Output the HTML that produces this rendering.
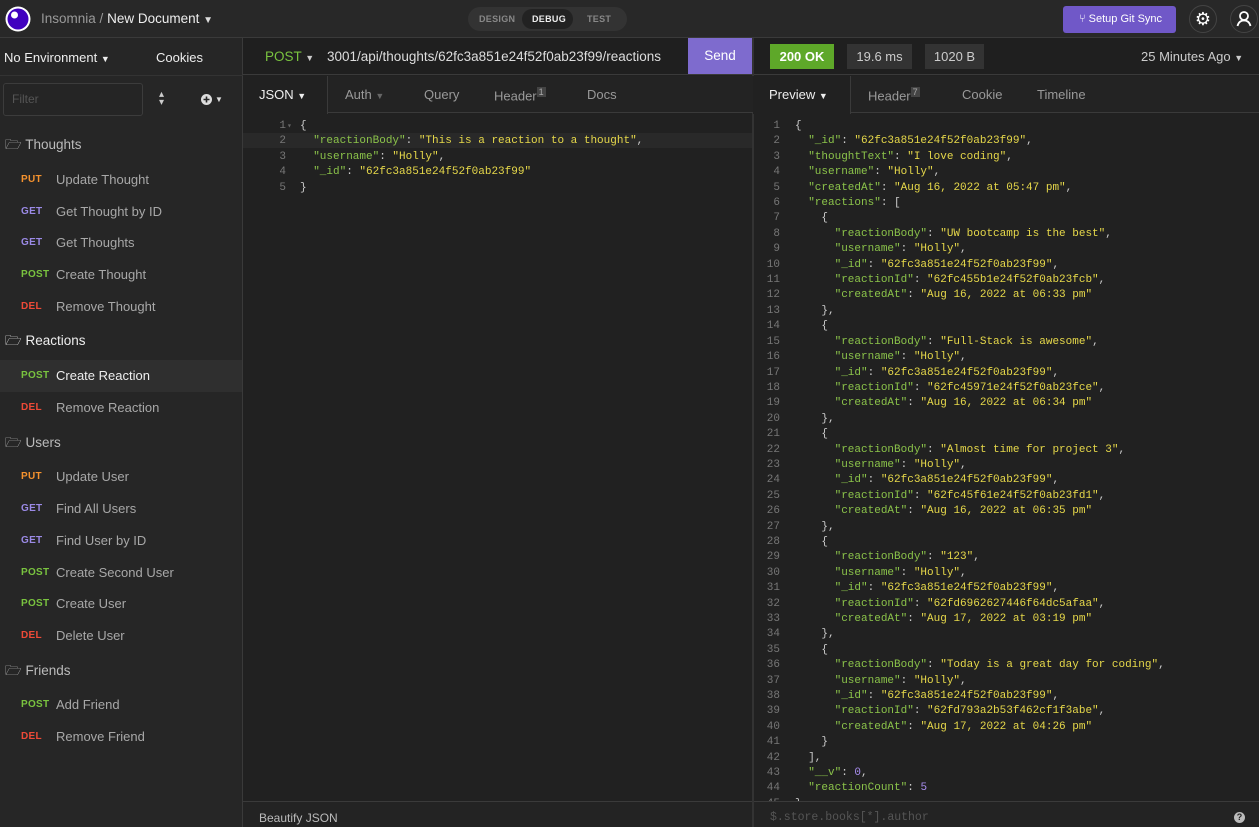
<!DOCTYPE html>
<html><head><meta charset="utf-8"><style>
*{box-sizing:border-box;margin:0;padding:0}
body{width:1259px;height:827px;overflow:hidden;background:#212121;font-family:"Liberation Sans",sans-serif;color:#ddd;position:relative;font-size:13px}
.abs{position:absolute}
.top{left:0;top:0;width:1259px;height:38px;background:#282828;border-bottom:1px solid #3a3a3a}
.side{left:0;top:38px;width:243px;height:789px;background:#262626;border-right:1px solid #3a3a3a}
.it{position:absolute;left:0;width:242px;height:32px;line-height:32px;font-size:13px;color:#a8a8a8}
.it .m{position:absolute;left:21px;font-size:10px;font-weight:bold;letter-spacing:.3px}
.it .t{position:absolute;left:56px}
.fold{position:absolute;left:5px;font-size:13.5px;color:#bbb}
.put{color:#f5922e}.get{color:#9b8ae6}.post{color:#79c33f}.del{color:#ef4a37}
.code{font-family:"Liberation Mono",monospace;font-size:11px;line-height:15.4px;white-space:pre}
.k{color:#8bc34a}.s{color:#e6d84a}.n{color:#a98ef0}.p{color:#ccc}
.ln{color:#777;text-align:right}
.tab{position:absolute;top:87px;font-size:13px;color:#999}
</style></head><body>
<div class="abs top"></div>
<svg class="abs" style="left:5px;top:6px" width="26" height="26" viewBox="0 0 26 26"><circle cx="13" cy="13" r="12.5" fill="#fff"/><circle cx="13" cy="13" r="10.5" fill="#4000bf"/><circle cx="9.5" cy="9" r="3.5" fill="#fff"/></svg>
<div class="abs" style="left:41px;top:11px;font-size:13.5px"><span style="color:#999">Insomnia</span> <span style="color:#999">/</span> <span style="color:#eee">New Document</span> <span style="font-size:10px">▼</span></div>
<div class="abs" style="left:468px;top:7px;width:159px;height:24px;border-radius:12px;background:#333"></div>
<div class="abs" style="left:522px;top:9px;width:51px;height:20px;border-radius:10px;background:#222"></div>
<div class="abs" style="left:479px;top:14px;font-size:9px;font-weight:bold;color:#888;letter-spacing:.3px">DESIGN</div>
<div class="abs" style="left:532px;top:14px;font-size:9px;font-weight:bold;color:#eee;letter-spacing:.3px">DEBUG</div>
<div class="abs" style="left:587px;top:14px;font-size:9px;font-weight:bold;color:#888;letter-spacing:.3px">TEST</div>
<div class="abs" style="left:1063px;top:6px;width:113px;height:27px;border-radius:3px;background:#7058c8;color:#fff;font-size:11px;line-height:27px;padding-left:16px">⑂ Setup Git Sync</div>
<div class="abs" style="left:1189px;top:5px;width:28px;height:28px;border-radius:50%;border:1px solid #444;color:#fff;font-size:18px;text-align:center;line-height:26px">⚙</div>
<svg class="abs" style="left:1230px;top:5px" width="28" height="28" viewBox="0 0 28 28"><circle cx="14" cy="14" r="13.5" fill="none" stroke="#444"/><circle cx="14" cy="11" r="4" fill="none" stroke="#fff" stroke-width="1.8"/><path d="M7.5 21c1-4 3.5-5.5 6.5-5.5s5.5 1.5 6.5 5.5" fill="none" stroke="#fff" stroke-width="1.8"/></svg>

<div class="abs side"></div>
<div class="abs" style="left:4px;top:50px;font-size:13px;color:#eee">No Environment <span style="font-size:9px">▼</span></div>
<div class="abs" style="left:156px;top:50px;font-size:13px;color:#eee">Cookies</div>
<div class="abs" style="left:0;top:75px;width:243px;height:1px;background:#333"></div>
<div class="abs" style="left:3px;top:83px;width:140px;height:33px;border:1px solid #3c3c3c;border-radius:3px;background:#252525;color:#555;font-size:12px;line-height:31px;padding-left:8px">Filter</div>
<div class="abs" style="left:159px;top:91px;font-size:10px;color:#ccc;line-height:8px">▴<br>▾</div>
<svg class="abs" style="left:201px;top:94px" width="11" height="11" viewBox="0 0 11 11"><circle cx="5.5" cy="5.5" r="5.5" fill="#ddd"/><path d="M5.5 2.5v6M2.5 5.5h6" stroke="#262626" stroke-width="1.6"/></svg>
<div class="abs" style="left:215px;top:95px;font-size:8px;color:#ddd">▼</div>

<div class="it" style="top:129px"><span class="fold">🗁 Thoughts</span></div>
<div class="it" style="top:164px"><span class="m put">PUT</span><span class="t">Update Thought</span></div>
<div class="it" style="top:196px"><span class="m get">GET</span><span class="t">Get Thought by ID</span></div>
<div class="it" style="top:227px"><span class="m get">GET</span><span class="t">Get Thoughts</span></div>
<div class="it" style="top:259px"><span class="m post">POST</span><span class="t">Create Thought</span></div>
<div class="it" style="top:291px"><span class="m del">DEL</span><span class="t">Remove Thought</span></div>
<div class="it" style="top:325px"><span class="fold" style="color:#eee">🗁 Reactions</span></div>
<div class="it" style="top:360px;background:#2f2f2f"><span class="m post">POST</span><span class="t" style="color:#eee">Create Reaction</span></div>
<div class="it" style="top:392px"><span class="m del">DEL</span><span class="t">Remove Reaction</span></div>
<div class="it" style="top:427px"><span class="fold">🗁 Users</span></div>
<div class="it" style="top:461px"><span class="m put">PUT</span><span class="t">Update User</span></div>
<div class="it" style="top:493px"><span class="m get">GET</span><span class="t">Find All Users</span></div>
<div class="it" style="top:525px"><span class="m get">GET</span><span class="t">Find User by ID</span></div>
<div class="it" style="top:557px"><span class="m post">POST</span><span class="t">Create Second User</span></div>
<div class="it" style="top:588px"><span class="m post">POST</span><span class="t">Create User</span></div>
<div class="it" style="top:620px"><span class="m del">DEL</span><span class="t">Delete User</span></div>
<div class="it" style="top:655px"><span class="fold">🗁 Friends</span></div>
<div class="it" style="top:689px"><span class="m post">POST</span><span class="t">Add Friend</span></div>
<div class="it" style="top:721px"><span class="m del">DEL</span><span class="t">Remove Friend</span></div>

<div class="abs" style="left:243px;top:38px;width:1016px;height:37px;background:#1f1f1f;border-bottom:1px solid #3a3a3a"></div>
<div class="abs" style="left:265px;top:49px;font-size:13.5px;color:#79c33f">POST <span style="font-size:9px;color:#ccc">▼</span></div>
<div class="abs" style="left:327px;top:49px;font-size:13.5px;color:#ddd">3001/api/thoughts/62fc3a851e24f52f0ab23f99/reactions</div>
<div class="abs" style="left:688px;top:38px;width:64px;height:36px;background:#7e6bce;color:#fff;font-size:13.5px;text-align:center;line-height:36px">Send</div>
<div class="abs" style="left:752px;top:38px;width:2px;height:789px;background:#333"></div>
<div class="abs" style="left:770px;top:44px;width:64px;height:25px;background:#5ea829;color:#fff;font-weight:bold;font-size:13px;text-align:center;line-height:25px">200 OK</div>
<div class="abs" style="left:847px;top:44px;width:65px;height:25px;background:#333;color:#ccc;font-size:13px;text-align:center;line-height:25px">19.6 ms</div>
<div class="abs" style="left:925px;top:44px;width:59px;height:25px;background:#333;color:#ccc;font-size:13px;text-align:center;line-height:25px">1020 B</div>
<div class="abs" style="left:1141px;top:49px;font-size:13px;color:#ccc">25 Minutes Ago <span style="font-size:9px">▼</span></div>

<div class="abs" style="left:243px;top:76px;width:1016px;height:37px;background:#232323;border-bottom:1px solid #3a3a3a"></div>
<div class="abs" style="left:243px;top:76px;width:85px;height:38px;background:#212121;border-right:1px solid #3a3a3a"></div>
<div class="abs" style="left:753px;top:76px;width:98px;height:38px;background:#212121;border-right:1px solid #3a3a3a"></div>
<div class="tab" style="left:259px;color:#eee">JSON <span style="font-size:9px">▼</span></div>
<div class="tab" style="left:345px">Auth <span style="font-size:9px;color:#666">▼</span></div>
<div class="tab" style="left:424px">Query</div>
<div class="tab" style="left:494px">Header<sup style="font-size:9px;background:#444;padding:0 2px;color:#aaa">1</sup></div>
<div class="tab" style="left:587px">Docs</div>
<div class="tab" style="left:769px;color:#eee">Preview <span style="font-size:9px">▼</span></div>
<div class="tab" style="left:868px">Header<sup style="font-size:9px;background:#444;padding:0 2px;color:#aaa">7</sup></div>
<div class="tab" style="left:962px">Cookie</div>
<div class="tab" style="left:1037px">Timeline</div>

<div class="abs" style="left:243px;top:133px;width:509px;height:15px;background:#292929"></div>
<div class="abs code ln" style="left:262px;top:119px;width:24px">1
2
3
4
5</div>
<div class="abs code" style="left:287px;top:119px;color:#666;font-size:8px;line-height:15.4px">▾</div>
<div class="abs code p" style="left:300px;top:119px">{
  <span class="k">"reactionBody"</span>: <span class="s">"This is a reaction to a thought"</span>,
  <span class="k">"username"</span>: <span class="s">"Holly"</span>,
  <span class="k">"_id"</span>: <span class="s">"62fc3a851e24f52f0ab23f99"</span>
}</div>

<div class="abs code ln" style="left:762px;top:119px;width:18px">1
2
3
4
5
6
7
8
9
10
11
12
13
14
15
16
17
18
19
20
21
22
23
24
25
26
27
28
29
30
31
32
33
34
35
36
37
38
39
40
41
42
43
44
45</div>
<div class="abs code p" style="left:795px;top:119px">{
  <span class="k">"_id"</span>: <span class="s">"62fc3a851e24f52f0ab23f99"</span>,
  <span class="k">"thoughtText"</span>: <span class="s">"I love coding"</span>,
  <span class="k">"username"</span>: <span class="s">"Holly"</span>,
  <span class="k">"createdAt"</span>: <span class="s">"Aug 16, 2022 at 05:47 pm"</span>,
  <span class="k">"reactions"</span>: [
    {
      <span class="k">"reactionBody"</span>: <span class="s">"UW bootcamp is the best"</span>,
      <span class="k">"username"</span>: <span class="s">"Holly"</span>,
      <span class="k">"_id"</span>: <span class="s">"62fc3a851e24f52f0ab23f99"</span>,
      <span class="k">"reactionId"</span>: <span class="s">"62fc455b1e24f52f0ab23fcb"</span>,
      <span class="k">"createdAt"</span>: <span class="s">"Aug 16, 2022 at 06:33 pm"</span>
    },
    {
      <span class="k">"reactionBody"</span>: <span class="s">"Full-Stack is awesome"</span>,
      <span class="k">"username"</span>: <span class="s">"Holly"</span>,
      <span class="k">"_id"</span>: <span class="s">"62fc3a851e24f52f0ab23f99"</span>,
      <span class="k">"reactionId"</span>: <span class="s">"62fc45971e24f52f0ab23fce"</span>,
      <span class="k">"createdAt"</span>: <span class="s">"Aug 16, 2022 at 06:34 pm"</span>
    },
    {
      <span class="k">"reactionBody"</span>: <span class="s">"Almost time for project 3"</span>,
      <span class="k">"username"</span>: <span class="s">"Holly"</span>,
      <span class="k">"_id"</span>: <span class="s">"62fc3a851e24f52f0ab23f99"</span>,
      <span class="k">"reactionId"</span>: <span class="s">"62fc45f61e24f52f0ab23fd1"</span>,
      <span class="k">"createdAt"</span>: <span class="s">"Aug 16, 2022 at 06:35 pm"</span>
    },
    {
      <span class="k">"reactionBody"</span>: <span class="s">"123"</span>,
      <span class="k">"username"</span>: <span class="s">"Holly"</span>,
      <span class="k">"_id"</span>: <span class="s">"62fc3a851e24f52f0ab23f99"</span>,
      <span class="k">"reactionId"</span>: <span class="s">"62fd6962627446f64dc5afaa"</span>,
      <span class="k">"createdAt"</span>: <span class="s">"Aug 17, 2022 at 03:19 pm"</span>
    },
    {
      <span class="k">"reactionBody"</span>: <span class="s">"Today is a great day for coding"</span>,
      <span class="k">"username"</span>: <span class="s">"Holly"</span>,
      <span class="k">"_id"</span>: <span class="s">"62fc3a851e24f52f0ab23f99"</span>,
      <span class="k">"reactionId"</span>: <span class="s">"62fd793a2b53f462cf1f3abe"</span>,
      <span class="k">"createdAt"</span>: <span class="s">"Aug 17, 2022 at 04:26 pm"</span>
    }
  ],
  <span class="k">"__v"</span>: <span class="n">0</span>,
  <span class="k">"reactionCount"</span>: <span class="n">5</span>
}</div>

<div class="abs" style="left:243px;top:801px;width:1016px;height:26px;background:#232323;border-top:1px solid #3a3a3a"></div>
<div class="abs" style="left:752px;top:801px;width:2px;height:26px;background:#333"></div>
<div class="abs" style="left:259px;top:811px;font-size:12px;color:#bbb">Beautify JSON</div>
<div class="abs code" style="left:770px;top:810px;color:#555;font-size:11.5px">$.store.books[*].author</div>
<div class="abs" style="left:1234px;top:812px;width:11px;height:11px;border-radius:50%;background:#bbb;color:#232323;font-size:9px;font-weight:bold;text-align:center;line-height:11px">?</div>
</body></html>
